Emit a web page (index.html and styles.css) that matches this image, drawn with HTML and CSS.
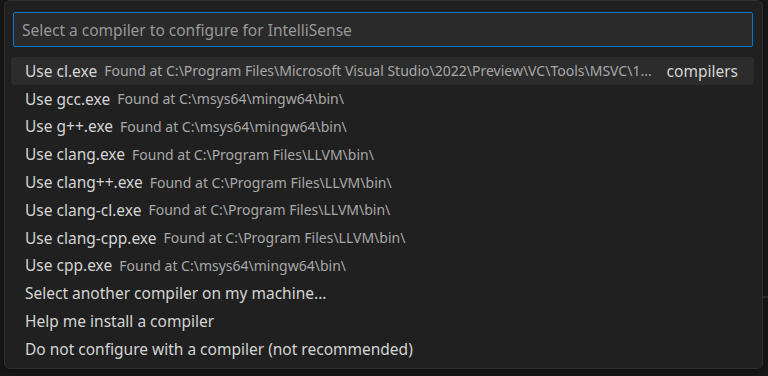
FILE: index.html
```html
<!DOCTYPE html>
<html lang="en">
<head>
  <meta charset="UTF-8" />
  <title>Select a compiler</title>
  <link rel="stylesheet" href="styles.css">
</head>
<body>
  <div class="stage">
    <div class="quick-pick">
      <div class="input-wrap">
        <input class="filter" type="text" placeholder="Select a compiler to configure for IntelliSense">
      </div>
      <ul class="list">
        <li class="item selected">
          <span class="label">Use cl.exe</span>
          <span class="desc">Found at C:\Program Files\Microsoft Visual Studio\2022\Preview\VC\Tools\MSVC\1...</span>
          <span class="sep">compilers</span>
        </li>
        <li class="item"><span class="label">Use gcc.exe</span><span class="desc">Found at C:\msys64\mingw64\bin\</span></li>
        <li class="item"><span class="label">Use g++.exe</span><span class="desc">Found at C:\msys64\mingw64\bin\</span></li>
        <li class="item"><span class="label">Use clang.exe</span><span class="desc">Found at C:\Program Files\LLVM\bin\</span></li>
        <li class="item"><span class="label">Use clang++.exe</span><span class="desc">Found at C:\Program Files\LLVM\bin\</span></li>
        <li class="item"><span class="label">Use clang-cl.exe</span><span class="desc">Found at C:\Program Files\LLVM\bin\</span></li>
        <li class="item"><span class="label">Use clang-cpp.exe</span><span class="desc">Found at C:\Program Files\LLVM\bin\</span></li>
        <li class="item"><span class="label">Use cpp.exe</span><span class="desc">Found at C:\msys64\mingw64\bin\</span></li>
        <li class="item"><span class="label">Select another compiler on my machine...</span></li>
        <li class="item"><span class="label">Help me install a compiler</span></li>
        <li class="item"><span class="label">Do not configure with a compiler (not recommended)</span></li>
      </ul>
    </div>
    <div class="side"></div>
  </div>
</body>
</html>
```

FILE: styles.css
```css
body {
  margin: 0;
  background: #181818;
  font-family: 'Noto Sans', 'Open Sans', sans-serif;
  overflow: hidden;
}
.stage {
  display: flex;
  height: 376px;
}
.quick-pick {
  margin-left: 4px;
  width: 759px;
  height: 369px;
  background: #202020;
  border: 1px solid #303030;
  border-radius: 6px;
  box-shadow: 0 0 8px rgba(0,0,0,0.5);
  padding-top: 11px;
  box-sizing: border-box;
}
.input-wrap {
  padding: 0 9px 0 8px;
}
.filter {
  display: block;
  width: 100%;
  height: 35px;
  box-sizing: border-box;
  background: #2a2a2a;
  border: 1px solid #0078d4;
  border-radius: 2px;
  color: #cccccc;
  font-family: inherit;
  font-size: 15.5px;
  padding: 0 8px;
  outline: none;
}
.filter::placeholder {
  color: #989898;
}
.list {
  list-style: none;
  margin: 10px 0 0;
  padding: 0 8px 0 6px;
}
.item {
  display: flex;
  align-items: center;
  height: 27.8px;
  padding: 0 16px 0 14px;
  border-radius: 4px;
  white-space: nowrap;
}
.item.selected {
  background: #2c2c2c;
}
.label {
  color: #d4d4d4;
  font-size: 15.5px;
}
.desc {
  color: #a8a8a8;
  font-size: 14px;
  margin-left: 7px;
}
.sep {
  margin-left: auto;
  color: #d4d4d4;
  font-size: 15.5px;
}
.side {
  flex: 1;
  margin-top: 296px;
  border-top: 2px solid #2a2a2a;
  background: #141414;
  height: 70px;
}
```
